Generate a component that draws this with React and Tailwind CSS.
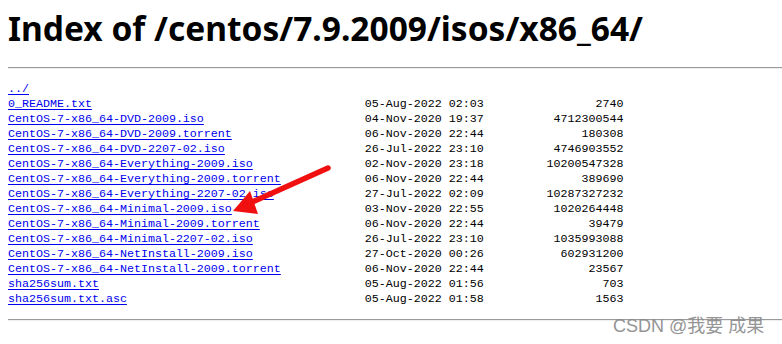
import React from 'react';

const files = [
  ['../', '', ''],
  ['0_README.txt', '05-Aug-2022 02:03', '2740'],
  ['CentOS-7-x86_64-DVD-2009.iso', '04-Nov-2020 19:37', '4712300544'],
  ['CentOS-7-x86_64-DVD-2009.torrent', '06-Nov-2020 22:44', '180308'],
  ['CentOS-7-x86_64-DVD-2207-02.iso', '26-Jul-2022 23:10', '4746903552'],
  ['CentOS-7-x86_64-Everything-2009.iso', '02-Nov-2020 23:18', '10200547328'],
  ['CentOS-7-x86_64-Everything-2009.torrent', '06-Nov-2020 22:44', '389690'],
  ['CentOS-7-x86_64-Everything-2207-02.iso', '27-Jul-2022 02:09', '10287327232'],
  ['CentOS-7-x86_64-Minimal-2009.iso', '03-Nov-2020 22:55', '1020264448'],
  ['CentOS-7-x86_64-Minimal-2009.torrent', '06-Nov-2020 22:44', '39479'],
  ['CentOS-7-x86_64-Minimal-2207-02.iso', '26-Jul-2022 23:10', '1035993088'],
  ['CentOS-7-x86_64-NetInstall-2009.iso', '27-Oct-2020 00:26', '602931200'],
  ['CentOS-7-x86_64-NetInstall-2009.torrent', '06-Nov-2020 22:44', '23567'],
  ['sha256sum.txt', '05-Aug-2022 01:56', '703'],
  ['sha256sum.txt.asc', '05-Aug-2022 01:58', '1563'],
];

const Row = ({ name, date, size }) => (
  <div className="whitespace-pre h-[15px] leading-[15px]">
    <a href="#" className="text-[#0000ee] underline underline-offset-2">{name}</a>
    {date ? ' '.repeat(51 - name.length) + date + size.padStart(20, ' ') : ''}
  </div>
);

const App = () => {
  return (
    <div className="relative w-[782px] h-[344px] bg-white overflow-hidden text-black">
      <h1 className="pl-2 pt-[5px] text-[33.5px] leading-[46px] font-bold font-['Noto_Sans',sans-serif]">
        Index of /centos/7.9.2009/isos/x86_64/
      </h1>
      <hr className="ml-2 mt-[16px] border-0 border-t border-t-[#9a9a9a] border-b border-b-[#eeeeee]" />
      <div className="pl-2 mt-[13px] text-[11.67px] font-['Liberation_Mono',monospace]">
        {files.map(([name, date, size]) => (
          <Row key={name} name={name} date={date} size={size} />
        ))}
      </div>
      <hr className="ml-2 mt-[12px] border-0 border-t border-t-[#9a9a9a] border-b border-b-[#eeeeee]" />

      {/* red arrow pointing at the minimal iso */}
      <svg className="absolute left-0 top-0 pointer-events-none" width="782" height="344">
        <line x1="328" y1="168" x2="250" y2="203" stroke="#f01010" strokeWidth="5.5" strokeLinecap="round" />
        <polygon points="233,211 250,191 258,214" fill="#f01010" />
      </svg>

      <div className="absolute left-[613px] top-[315px] text-[18px] leading-[22px] text-[#8a8a8a] opacity-90 font-['Liberation_Sans','Noto_Sans_CJK_SC',sans-serif]">
        CSDN @我要 成果
      </div>
    </div>
  );
};

export default App;
